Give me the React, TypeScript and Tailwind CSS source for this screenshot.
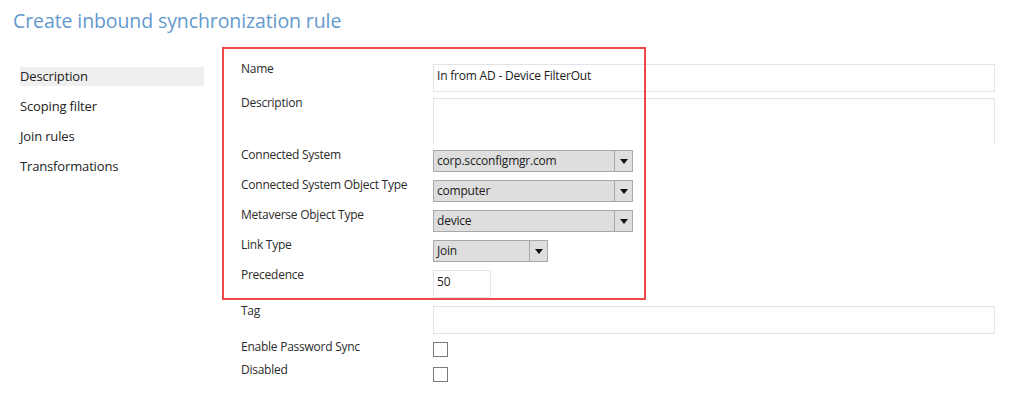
import React from "react";

const font = { fontFamily: '"Open Sans", "Noto Sans", sans-serif' };

function Arrow() {
  return (
    <svg width="8" height="5" viewBox="0 0 8 5">
      <path d="M0 0 L8 0 L4 5 Z" fill="#111" />
    </svg>
  );
}

function Select({ value, width }: { value: string; width: string }) {
  return (
    <div className={`flex h-[22px] ${width} border border-[#a9a9a9] bg-[#dedede]`}>
      <div className="flex flex-1 items-center pl-[3px] text-[12px] tracking-[-0.2px] text-[#1b1b1b]">{value}</div>
      <div className="flex w-[18px] items-center justify-center border-l border-[#a9a9a9]">
        <Arrow />
      </div>
    </div>
  );
}

function Row({ label, h, children }: { label: string; h: string; children?: React.ReactNode }) {
  return (
    <div className={`flex ${h}`}>
      <div className="w-[192px] text-[12px] leading-[16px] tracking-[-0.25px] text-[#2b2b2b]">{label}</div>
      <div className="pt-[3px]">{children}</div>
    </div>
  );
}

export default function App() {
  const nav = ["Description", "Scoping filter", "Join rules", "Transformations"];
  return (
    <div className="relative h-[407px] w-[1024px] overflow-hidden bg-white" style={font}>
      <h1 className="pl-[13px] pt-[7px] text-[19.5px] leading-[28px] tracking-[-0.1px] text-[#6399ce]">
        Create inbound synchronization rule
      </h1>
      <div className="flex pt-[26px]">
        <nav className="ml-[20px] mt-[6px] flex w-[184px] flex-col gap-[11px]">
          {nav.map((n, i) => (
            <div
              key={n}
              className={`flex h-[19px] items-center text-[13px] tracking-[-0.15px] text-[#222] ${i === 0 ? "bg-[#efefef]" : ""}`}
            >
              {n}
            </div>
          ))}
        </nav>
        <div className="ml-[37px] flex flex-col">
          <Row label="Name" h="h-[34px]">
            <div className="flex h-[28px] w-[562px] items-start border border-[#e3e3ec] px-[3px] pt-[2px] text-[12px] tracking-[-0.2px] text-[#1b1b1b]">
              In from AD - Device FilterOut
            </div>
          </Row>
          <Row label="Description" h="h-[52px]">
            <div className="h-[46px] w-[562px] border border-b-0 border-[#e3e3ec]" />
          </Row>
          <Row label="Connected System" h="h-[30px]">
            <Select value="corp.scconfigmgr.com" width="w-[200px]" />
          </Row>
          <Row label="Connected System Object Type" h="h-[30px]">
            <Select value="computer" width="w-[200px]" />
          </Row>
          <Row label="Metaverse Object Type" h="h-[30px]">
            <Select value="device" width="w-[200px]" />
          </Row>
          <Row label="Link Type" h="h-[30px]">
            <Select value="Join" width="w-[115px]" />
          </Row>
          <Row label="Precedence" h="h-[36px]">
            <div className="h-[28px] w-[58px] border border-[#e3e3ec] px-[3px] pt-[2px] text-[12px] text-[#1b1b1b]">
              50
            </div>
          </Row>
          <Row label="Tag" h="h-[36px]">
            <div className="h-[28px] w-[562px] border border-[#e3e3ec]" />
          </Row>
          <Row label="Enable Password Sync" h="h-[23px]">
            <div className="h-[15px] w-[15px] border border-[#7a7a7a] bg-white" />
          </Row>
          <Row label="Disabled" h="h-[23px]">
            <div className="mt-[2px] h-[15px] w-[15px] border border-[#7a7a7a] bg-white" />
          </Row>
        </div>
      </div>
      <div className="pointer-events-none absolute left-[222px] top-[47px] h-[253px] w-[424px] border-2 border-[#f04848]" />
    </div>
  );
}
